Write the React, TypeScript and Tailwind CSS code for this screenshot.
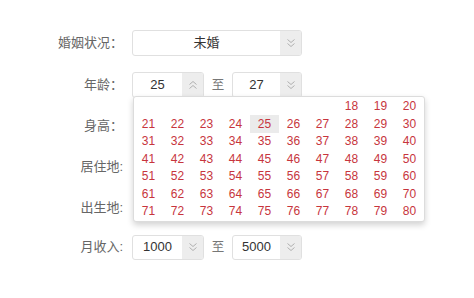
import { Fragment } from "react";

// double chevron used in the select boxes
function Chevrons({ up }: { up?: boolean }) {
  return (
    <svg width="10" height="10" viewBox="0 0 10 10" className={up ? "rotate-180" : ""}>
      <path d="M1.5 1.5 L5 4.5 L8.5 1.5" fill="none" stroke="#b0b0b0" strokeWidth="1" />
      <path d="M1.5 5.5 L5 8.5 L8.5 5.5" fill="none" stroke="#b0b0b0" strokeWidth="1" />
    </svg>
  );
}

function Select({
  value,
  width,
  height,
  up,
}: {
  value: string;
  width: string;
  height: string;
  up?: boolean;
}) {
  return (
    <div
      className={`flex ${width} ${height} rounded-[3px] border border-[#e0e0e0] bg-white overflow-hidden`}
    >
      <div className="flex-1 flex items-center justify-center text-[13px] text-[#333]">
        {value}
      </div>
      <div className="w-[21px] flex items-center justify-center bg-[#ededed]">
        <Chevrons up={up} />
      </div>
    </div>
  );
}

export default function App() {
  const cells: (number | null)[] = [];
  for (let i = 0; i < 7; i++) cells.push(null);
  for (let n = 18; n <= 80; n++) cells.push(n);

  const labelCls =
    "w-[124px] text-right text-[13px] text-[#666] pr-[1px] shrink-0";

  return (
    <div
      className="w-[474px] h-[298px] bg-white pt-[22px]"
      style={{ fontFamily: '"Liberation Sans", Arial, "Noto Sans CJK SC", sans-serif' }}
    >
      {/* 婚姻状况 */}
      <div className="flex items-center h-[42px]">
        <div className={labelCls}>婚姻状况：</div>
        <div className="ml-[8px]">
          <Select value="未婚" width="w-[170px]" height="h-[26px]" />
        </div>
      </div>

      {/* 年龄 */}
      <div className="flex items-center h-[42px] relative z-10">
        <div className={labelCls}>年龄：</div>
        <div className="ml-[8px] flex items-center relative">
          <Select value="25" width="w-[72px]" height="h-[26px]" up />
          <div className="w-[28px] text-center text-[12.5px] text-[#777]">至</div>
          <Select value="27" width="w-[70px]" height="h-[26px]" />

          <div className="absolute left-[1px] top-[24px] w-[292px] bg-white border border-[#dcdcdc] rounded-[3px] shadow-[0_3px_6px_rgba(0,0,0,0.18)]">
            <div className="grid grid-cols-10 py-[0.5px]">
              {cells.map((n, i) => (
                <Fragment key={i}>
                  <div
                    className={`h-[17.5px] flex items-center justify-center text-[12px] text-[#c7353d] ${
                      n === 25 ? "bg-[#ebebeb]" : ""
                    }`}
                  >
                    {n ?? ""}
                  </div>
                </Fragment>
              ))}
            </div>
          </div>
        </div>
      </div>

      {/* 身高 */}
      <div className="flex items-center h-[40px]">
        <div className={labelCls}>身高：</div>
      </div>

      {/* 居住地 */}
      <div className="flex items-center h-[42px]">
        <div className={labelCls}>居住地:</div>
      </div>

      {/* 出生地 */}
      <div className="flex items-center h-[40px]">
        <div className={labelCls}>出生地:</div>
      </div>

      {/* 月收入 */}
      <div className="flex items-center h-[38px]">
        <div className={labelCls}>月收入:</div>
        <div className="ml-[8px] flex items-center">
          <Select value="1000" width="w-[72px]" height="h-[25px]" />
          <div className="w-[28px] text-center text-[12.5px] text-[#777]">至</div>
          <Select value="5000" width="w-[70px]" height="h-[25px]" />
        </div>
      </div>
    </div>
  );
}
